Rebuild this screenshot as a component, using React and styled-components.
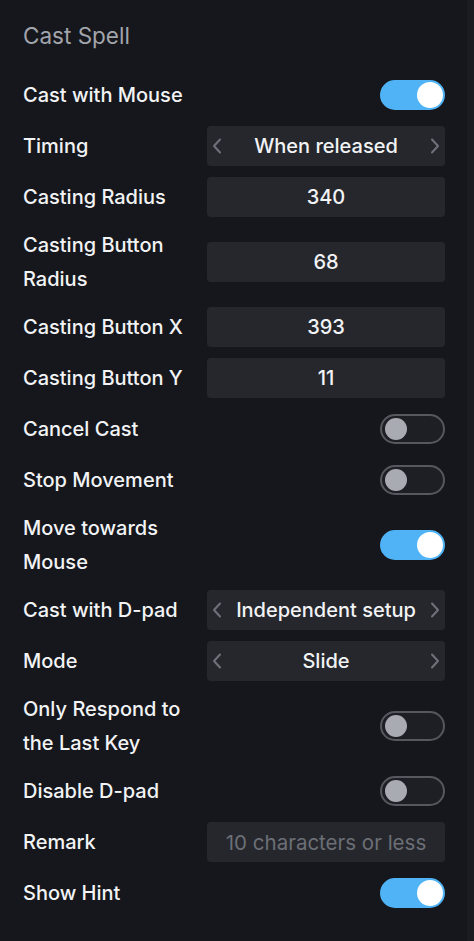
import React from "react";
import styled, { createGlobalStyle } from "styled-components";

const Global = createGlobalStyle`
  html, body { margin: 0; padding: 0; background: #15171c; }
  body { font-family: Inter, "Noto Sans", "Liberation Sans", sans-serif; -webkit-font-smoothing: antialiased; }
`;

const Page = styled.div`
  min-height: 941px;
  display: flex;
  background: #1a1c21;
`;

const Panel = styled.div`
  width: 467px;
  box-sizing: border-box;
  background: #15171c;
  padding: 22px 22px 0 23px;
`;

const Title = styled.h2`
  margin: 0 0 25px;
  font-size: 22.5px;
  line-height: 28px;
  font-weight: 400;
  color: #a2a5ab;
`;

const Grid = styled.div`
  display: grid;
  grid-template-columns: 1fr 238px;
  row-gap: 11px;
  align-items: center;
`;

const Label = styled.div`
  font-size: 20px;
  line-height: 34px;
  font-weight: 500;
  color: #f2f3f5;
  min-height: 40px;
  display: flex;
  align-items: center;
  padding-right: 4px;
  white-space: nowrap;
`;

const Box = styled.div`
  height: 40px;
  border-radius: 4px;
  background: #25272d;
  display: flex;
  align-items: center;
  justify-content: space-between;
  padding: 0 5px;
  box-sizing: border-box;
  font-size: 20px;
  font-weight: 500;
  color: ${(p) => (p.$placeholder ? "#6c6f76" : "#f2f3f5")};
`;

const Value = styled.span`
  flex: 1;
  text-align: center;
  font-size: ${(p) => (p.$placeholder ? "20.5px" : "20px")};
  font-weight: ${(p) => (p.$placeholder ? 400 : 500)};
`;

const Toggle = styled.div`
  justify-self: end;
  width: 65px;
  height: 30px;
  box-sizing: border-box;
  border-radius: 15px;
  position: relative;
  background: ${(p) => (p.$on ? "#4fb3f6" : "#1d1f24")};
  border: 2px solid ${(p) => (p.$on ? "#4fb3f6" : "#55585e")};
`;

const Knob = styled.span`
  position: absolute;
  top: 50%;
  transform: translateY(-50%);
  border-radius: 50%;
  ${(p) =>
    p.$on
      ? `right: 0; width: 26px; height: 26px; background: #ffffff;`
      : `left: 3px; width: 22px; height: 22px; background: #a9abb3;`}
`;

const Chevron = ({ dir }) => (
  <svg width="10" height="16" viewBox="0 0 10 16" fill="none">
    <path
      d={dir === "left" ? "M8 1.5 L2 8 L8 14.5" : "M2 1.5 L8 8 L2 14.5"}
      stroke="#6f727a"
      strokeWidth="2"
      strokeLinecap="round"
      strokeLinejoin="round"
    />
  </svg>
);

const Switch = ({ on }) => (
  <Toggle $on={on}>
    <Knob $on={on} />
  </Toggle>
);

const Selector = ({ value }) => (
  <Box>
    <Chevron dir="left" />
    <Value>{value}</Value>
    <Chevron dir="right" />
  </Box>
);

const Field = ({ value, placeholder }) => (
  <Box $placeholder={!value}>
    <Value $placeholder={!value}>{value || placeholder}</Value>
  </Box>
);

const rows = [
  ["Cast with Mouse", <Switch on />],
  ["Timing", <Selector value="When released" />],
  ["Casting Radius", <Field value="340" />],
  [<>Casting Button<br />Radius</>, <Field value="68" />],
  ["Casting Button X", <Field value="393" />],
  ["Casting Button Y", <Field value="11" />],
  ["Cancel Cast", <Switch />],
  ["Stop Movement", <Switch />],
  [<>Move towards<br />Mouse</>, <Switch on />],
  ["Cast with D-pad", <Selector value="Independent setup" />],
  ["Mode", <Selector value="Slide" />],
  [<>Only Respond to<br />the Last Key</>, <Switch />],
  ["Disable D-pad", <Switch />],
  ["Remark", <Field placeholder="10 characters or less" />],
  ["Show Hint", <Switch on />],
];

export default function App() {
  return (
    <>
      <Global />
      <Page>
        <Panel>
          <Title>Cast Spell</Title>
          <Grid>
            {rows.map(([label, control], i) => (
              <React.Fragment key={i}>
                <Label>
                  <span>{label}</span>
                </Label>
                {control}
              </React.Fragment>
            ))}
          </Grid>
        </Panel>
      </Page>
    </>
  );
}
